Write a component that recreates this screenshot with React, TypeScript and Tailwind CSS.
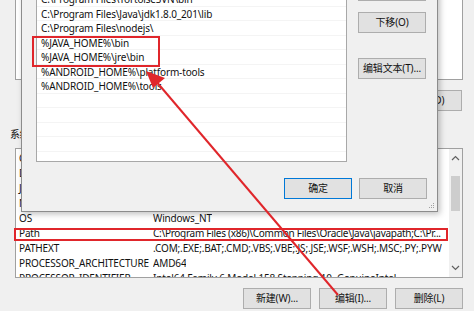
const font = "font-['Noto_Sans','Noto_Sans_CJK_SC',sans-serif]"

const pathRows = [
  '%SystemRoot%\\System32\\WindowsPowerShell\\v1.0\\',
  '%SYSTEMROOT%\\System32\\OpenSSH\\',
  'C:\\Program Files\\TortoiseSVN\\bin',
  'C:\\Program Files\\Java\\jdk1.8.0_201\\lib',
  'C:\\Program Files\\nodejs\\',
  '%JAVA_HOME%\\bin',
  '%JAVA_HOME%\\jre\\bin',
  '%ANDROID_HOME%\\platform-tools',
  '%ANDROID_HOME%\\tools',
  '',
  '',
  '',
  '',
  '',
  '',
]

const sysRows = [
  ['ComSpec', 'C:\\WINDOWS\\system32\\cmd.exe'],
  ['DriverData', 'C:\\Windows\\System32\\Drivers\\DriverData'],
  ['JAVA_HOME', 'C:\\Program Files\\Java\\jdk1.8.0_201'],
  ['NUMBER_OF_PROCESSORS', '12'],
  ['OS', 'Windows_NT'],
  ['Path', 'C:\\Program Files (x86)\\Common Files\\Oracle\\Java\\javapath;C:\\Pr...'],
  ['PATHEXT', '.COM;.EXE;.BAT;.CMD;.VBS;.VBE;.JS;.JSE;.WSF;.WSH;.MSC;.PY;.PYW'],
  ['PROCESSOR_ARCHITECTURE', 'AMD64'],
  ['PROCESSOR_IDENTIFIER', 'Intel64 Family 6 Model 158 Stepping 10, GenuineIntel'],
]

function Btn({ label, primary }: { label: string; primary?: boolean }) {
  return (
    <div
      className={`flex items-center justify-center w-[68px] h-[21px] shrink-0 bg-[#e1e1e1] border text-[10px] text-[#111] ${
        primary ? 'border-[#0078d7]' : 'border-[#adadad]'
      }`}
    >
      {label}
    </div>
  )
}

export default function App() {
  return (
    <div className={`relative w-[474px] h-[311px] overflow-hidden bg-[#f0f0f0] text-[#111] tracking-[-0.15px] ${font}`}>
      {/* background window: 环境变量 */}
      <div className="flex flex-col pl-[10px] pr-[11px]">
        <div className="ml-[5px] mt-[-20px] h-[100px] bg-white border border-[#a0a0a0]" />
        <div className="flex justify-end gap-[8px] mt-[10px] pr-[1px]">
          <Btn label="新建(N)..." />
          <Btn label="编辑(E)..." />
          <Btn label="删除(D)" />
        </div>
        <div className="mt-[16px] h-[14px] leading-[14px] text-[10px]">系统变量(S)</div>
        <div className="ml-[5px] mt-[7px] h-[130px] flex bg-white border border-[#a0a0a0] overflow-hidden">
          <div className="flex-1 min-w-0 pt-[2px] overflow-hidden">
            {sysRows.map(([name, value]) => (
              <div key={name} className="flex h-[15px] items-center text-[10px] whitespace-nowrap">
                <span className="w-[137px] pl-[3px] shrink-0">{name}</span>
                <span className={`overflow-hidden ${name === 'Path' ? 'tracking-[-0.28px]' : ''}`}>{value}</span>
              </div>
            ))}
          </div>
          <div className="w-[13px] shrink-0 flex flex-col items-center bg-[#f0f0f0]">
            <svg width="9" height="6" viewBox="0 0 9 6" className="mt-[6px]">
              <path d="M1 5 L4.5 1.5 L8 5" fill="none" stroke="#606060" strokeWidth="1.2" />
            </svg>
            <div className="mt-[15px] w-[9px] h-[35px] bg-[#cdcdcd]" />
            <div className="flex-1" />
            <svg width="9" height="6" viewBox="0 0 9 6" className="mb-[6px]">
              <path d="M1 1 L4.5 4.5 L8 1" fill="none" stroke="#606060" strokeWidth="1.2" />
            </svg>
          </div>
        </div>
        <div className="flex justify-end gap-[8px] mt-[10px]">
          <Btn label="新建(W)..." />
          <Btn label="编辑(I)..." />
          <Btn label="删除(L)" />
        </div>
      </div>

      {/* foreground dialog: 编辑环境变量 */}
      <div className="absolute left-[21px] top-[-50px] w-[417px] h-[262px] flex flex-col bg-[#f0f0f0] border border-t-0 border-[#8c8c8c] shadow-[2px_2px_6px_rgba(0,0,0,0.25)]">
        <div className="flex flex-1 pl-[14px] pr-[10px] pt-[12px] gap-[11px]">
          <div className="w-[311px] h-[200px] bg-white border border-[#a8a8a8] overflow-hidden">
            {pathRows.map((row, i) => (
              <div
                key={i}
                className="h-[14.5px] leading-[14px] pl-[4px] text-[10px] whitespace-nowrap border-b border-[#f4f4f4]"
              >
                {row}
              </div>
            ))}
          </div>
          <div className="flex flex-col pt-[18px]">
            <Btn label="上移(U)" />
            <div className="h-[11px]" />
            <Btn label="下移(O)" />
            <div className="h-[25px]" />
            <Btn label="编辑文本(T)..." />
          </div>
        </div>
        <div className="flex justify-end gap-[7px] pr-[10px] pb-[12px]">
          <Btn label="确定" primary />
          <Btn label="取消" />
        </div>
        <svg width="8" height="8" viewBox="0 0 8 8" className="absolute right-[2px] bottom-[2px]">
          <rect x="6" y="2" width="1" height="1" fill="#a0a0a0" />
          <rect x="4" y="4" width="1" height="1" fill="#a0a0a0" />
          <rect x="6" y="4" width="1" height="1" fill="#a0a0a0" />
          <rect x="2" y="6" width="1" height="1" fill="#a0a0a0" />
          <rect x="4" y="6" width="1" height="1" fill="#a0a0a0" />
          <rect x="6" y="6" width="1" height="1" fill="#a0a0a0" />
        </svg>
      </div>

      {/* red annotations */}
      <div className="absolute left-[32px] top-[36px] w-[128px] h-[31px] border-2 border-[#e0262b]" />
      <div className="absolute left-[14px] top-[228px] w-[434px] h-[13px] border-2 border-[#e0262b]" />
      <svg className="absolute left-0 top-0" width="474" height="311" viewBox="0 0 474 311">
        <line x1="338" y1="295" x2="155" y2="80" stroke="#e0262b" strokeWidth="2" />
        <polygon points="146,71 153,88 165,78" fill="#e0262b" />
      </svg>
    </div>
  )
}
